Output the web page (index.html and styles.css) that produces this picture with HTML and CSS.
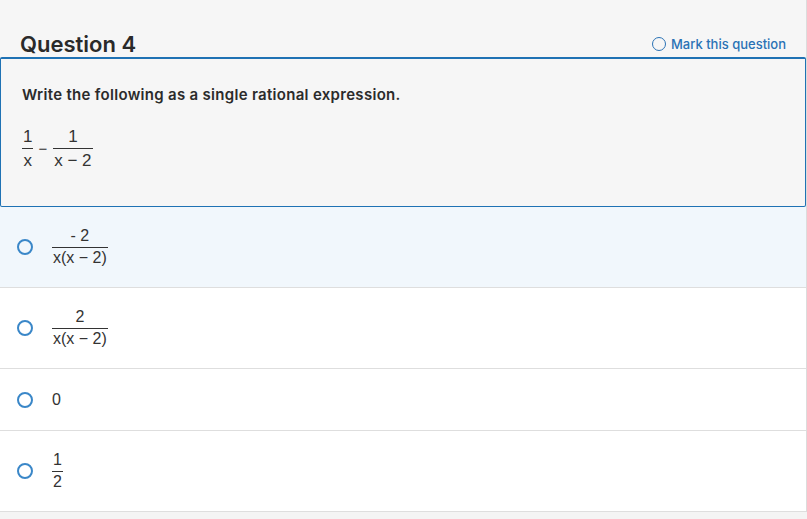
FILE: index.html
```html
<!DOCTYPE html>
<html>
<head>
<meta charset="utf-8">
<link rel="stylesheet" href="styles.css">
</head>
<body>
<div class="page">
  <header class="qhead">
    <h2 class="qtitle">Question 4</h2>
    <a class="mark" href="#"><span class="ring"></span>Mark this question</a>
  </header>
  <section class="qbox">
    <p class="prompt">Write the following as a single rational expression.</p>
    <div class="math">
      <span class="frac"><span class="num">1</span><span class="den">x</span></span>
      <span class="op">−</span>
      <span class="frac"><span class="num">1</span><span class="den">x − 2</span></span>
    </div>
  </section>
  <ul class="options">
    <li class="opt hover tall">
      <span class="radio"></span>
      <span class="frac ans"><span class="num">- 2</span><span class="den">x(x − 2)</span></span>
    </li>
    <li class="opt tall">
      <span class="radio"></span>
      <span class="frac ans"><span class="num">2</span><span class="den">x(x − 2)</span></span>
    </li>
    <li class="opt short">
      <span class="radio"></span>
      <span class="plain">0</span>
    </li>
    <li class="opt tall">
      <span class="radio"></span>
      <span class="frac ans"><span class="num">1</span><span class="den">2</span></span>
    </li>
  </ul>
</div>
</body>
</html>
```

FILE: styles.css
```css
html, body {
  margin: 0;
  padding: 0;
  background: #f4f4f4;
}
.page {
  width: 806px;
  border-right: 1px solid #dcdcdc;
  font-family: Inter, Lato, Arial, sans-serif;
  color: #2b2b2b;
}
.qhead {
  height: 57px;
  box-sizing: border-box;
  display: flex;
  align-items: flex-end;
  justify-content: space-between;
  padding: 0 20px 0 20px;
  background: #f6f6f6;
}
.qtitle {
  margin: 0;
  font-size: 22px;
  font-weight: 600;
  line-height: 26px;
  color: #2a2a2a;
}
.mark {
  display: flex;
  align-items: center;
  gap: 5px;
  font-size: 13px;
  font-weight: 500;
  color: #2a72b5;
  text-decoration: none;
  margin-bottom: 5px;
}
.ring {
  width: 12px;
  height: 12px;
  border: 1.5px solid #2a72b5;
  border-radius: 50%;
}
.qbox {
  height: 150px;
  box-sizing: border-box;
  border: 1px solid #1f72b4;
  border-top: 2px solid #1f72b4;
  border-radius: 2px;
  background: #f6f6f6;
  padding: 26px 21px 0 21px;
}
.prompt {
  margin: 0;
  font-size: 15px;
  font-weight: 600;
  letter-spacing: 0.3px;
  line-height: 20px;
  color: #2b2b2b;
}
.math {
  margin-top: 22px;
  display: flex;
  align-items: center;
  gap: 5px;
  color: #333;
}
.op {
  font-family: "Liberation Sans", Arial, sans-serif;
  font-size: 15px;
  margin-right: 1px;
}
.frac {
  display: inline-flex;
  flex-direction: column;
  align-items: center;
  font-family: "Liberation Sans", Arial, sans-serif;
  font-size: 17px;
  line-height: 19px;
  color: #333;
}
.frac .num {
  padding: 0 1px 2px;
  border-bottom: 1px solid #333;
  align-self: stretch;
  text-align: center;
}
.frac .den {
  padding: 2px 1px 0;
}
.options {
  list-style: none;
  margin: 0;
  padding: 0;
  background: #fff;
}
.opt {
  display: flex;
  align-items: center;
  gap: 19px;
  padding: 0 17px;
  border-bottom: 1px solid #dedede;
  box-sizing: border-box;
  background: #fff;
}
.opt.tall { height: 81px; }
.opt.short { height: 62px; }
.opt.hover { background: #f1f7fc; }
.radio {
  width: 12px;
  height: 12px;
  border: 2px solid #3a87c8;
  border-radius: 50%;
  flex: none;
}
.ans {
  font-size: 16px;
  line-height: 18px;
}
.ans .den { padding-top: 1px; }
.plain {
  font-family: "Liberation Sans", Arial, sans-serif;
  font-size: 16px;
  color: #333;
}
```
